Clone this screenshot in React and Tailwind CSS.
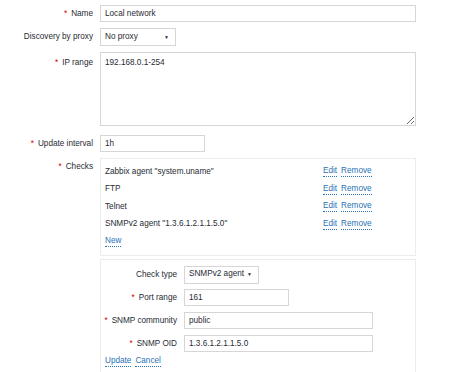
import React from "react";

const FONT = { fontFamily: '"Liberation Sans", Arial, sans-serif' };

function Label({ text, req, className = "" }) {
  return (
    <div className={"shrink-0 flex justify-end whitespace-nowrap leading-[17px] text-[#1f2c33] " + className}>
      {req && <span className="text-[#d40000] mr-[4px]">*</span>}
      <span>{text}</span>
    </div>
  );
}

function Field({ value, w }) {
  return (
    <div
      className={"h-[17px] border border-[#d6d6d6] bg-white px-[4px] leading-[15px] text-[#1f2c33] whitespace-nowrap overflow-hidden " + w}
    >
      {value}
    </div>
  );
}

function Select({ value, w }) {
  return (
    <div
      className={"h-[18px] border border-[#d6d6d6] bg-white pl-[4px] pr-[6px] flex items-center justify-between text-[#1f2c33] whitespace-nowrap " + w}
    >
      <span>{value}</span>
      <span className="text-[5px] leading-none">▼</span>
    </div>
  );
}

function Link({ children, className = "" }) {
  return (
    <span className={"text-[#2a72b5] border-b border-dotted border-[#2a72b5] leading-[10px] " + className}>
      {children}
    </span>
  );
}

const checks = [
  'Zabbix agent "system.uname"',
  "FTP",
  "Telnet",
  'SNMPv2 agent "1.3.6.1.2.1.1.5.0"',
];

export default function App() {
  return (
    <div style={FONT} className="w-[474px] h-[372px] bg-white pt-[5px] text-[8.2px] overflow-hidden">
      {/* NAME */}
      <div className="flex gap-[7px] mb-[6px]">
        <Label text="Name" req className="w-[93px]" />
        <Field value="Local network" w="w-[316px]" />
      </div>

      {/* PROXY */}
      <div className="flex gap-[7px] mb-[6px]">
        <Label text="Discovery by proxy" className="w-[93px]" />
        <Select value="No proxy" w="w-[76px] h-[17px]" />
      </div>

      {/* IP RANGE */}
      <div className="flex gap-[7px] mb-[9px]">
        <Label text="IP range" req className="w-[93px] pt-[2px]" />
        <textarea
          readOnly
          value="192.168.0.1-254"
          style={FONT}
          className="w-[316px] h-[74px] border border-[#d6d6d6] px-[4px] pt-[5px] text-[8.2px] leading-[10px] text-[#1f2c33] outline-none"
        />
      </div>

      {/* UPDATE INTERVAL */}
      <div className="flex gap-[7px] mb-[6px]">
        <Label text="Update interval" req className="w-[93px]" />
        <Field value="1h" w="w-[105px]" />
      </div>

      {/* CHECKS */}
      <div className="flex gap-[7px]">
        <Label text="Checks" req className="w-[93px]" />
        <div className="w-[316px]">
          <div className="border border-[#ececec] pt-[4px] pb-[4px] px-[4px]">
            {checks.map((c) => (
              <div key={c} className="flex items-center h-[17.5px] text-[#1f2c33]">
                <div className="w-[218px] whitespace-nowrap">{c}</div>
                <div className="flex gap-[4px]">
                  <Link>Edit</Link>
                  <Link>Remove</Link>
                </div>
              </div>
            ))}
            <div className="flex items-center h-[17.5px]">
              <Link>New</Link>
            </div>
          </div>

          {/* CHECK FORM */}
          <div className="mt-[3px] border border-[#ececec] pt-[6px] pb-[5px]">
            <div className="flex gap-[7px] mb-[5px]">
              <Label text="Check type" className="w-[76px] leading-[18px]" />
              <Select value="SNMPv2 agent" w="w-[75px]" />
            </div>
            <div className="flex gap-[7px] mb-[6px]">
              <Label text="Port range" req className="w-[76px]" />
              <Field value="161" w="w-[105px]" />
            </div>
            <div className="flex gap-[7px] mb-[6px]">
              <Label text="SNMP community" req className="w-[76px]" />
              <Field value="public" w="w-[189px]" />
            </div>
            <div className="flex gap-[7px] mb-[3px]">
              <Label text="SNMP OID" req className="w-[76px]" />
              <Field value="1.3.6.1.2.1.1.5.0" w="w-[189px]" />
            </div>
            <div className="flex gap-[4px] pl-[4px] h-[14px] items-center">
              <Link>Update</Link>
              <Link>Cancel</Link>
            </div>
          </div>
        </div>
      </div>
    </div>
  );
}
